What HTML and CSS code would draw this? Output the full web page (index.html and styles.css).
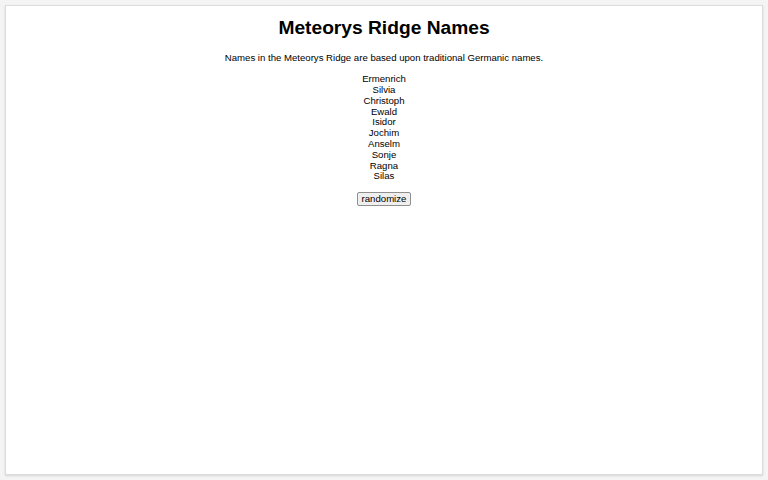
FILE: index.html
```html
<!DOCTYPE html>
<html>
<head>
<meta charset="utf-8">
<link rel="stylesheet" href="styles.css">
</head>
<body>
<div class="card">
  <h1 class="title">Meteorys Ridge Names</h1>
  <p class="intro">Names in the Meteorys Ridge are based upon traditional Germanic names.</p>
  <div class="names">
    <div>Ermenrich</div>
    <div>Silvia</div>
    <div>Christoph</div>
    <div>Ewald</div>
    <div>Isidor</div>
    <div>Jochim</div>
    <div>Anselm</div>
    <div>Sonje</div>
    <div>Ragna</div>
    <div>Silas</div>
  </div>
  <button class="btn">randomize</button>
</div>
</body>
</html>
```
FILE: styles.css
```css
html, body {
  margin: 0;
  padding: 0;
  height: 100%;
}
body {
  background: #f4f4f4;
  font-family: "Liberation Sans", Arial, sans-serif;
  color: #000;
  padding: 5px;
  box-sizing: border-box;
}
.card {
  background: #fff;
  border: 1px solid #dcdcdc;
  box-shadow: 0 1px 2px rgba(0,0,0,0.12);
  height: 470px;
  box-sizing: border-box;
  text-align: center;
  padding-top: 11px;
}
.title {
  font-size: 19.2px;
  font-weight: bold;
  margin: 0 0 12.5px 0;
  line-height: 22px;
}
.intro {
  font-size: 9.6px;
  margin: 0 0 11.8px 0;
  line-height: 11px;
}
.names {
  font-size: 9.6px;
  line-height: 10.8px;
}
.btn {
  margin-top: 10px;
  font-family: "Liberation Sans", Arial, sans-serif;
  font-size: 9.6px;
  line-height: 12px;
  padding: 0 4px;
  height: 14px;
  box-sizing: border-box;
  border: 1px solid #8f8f8f;
  border-radius: 2px;
  background: #efefef;
  color: #000;
}
```
